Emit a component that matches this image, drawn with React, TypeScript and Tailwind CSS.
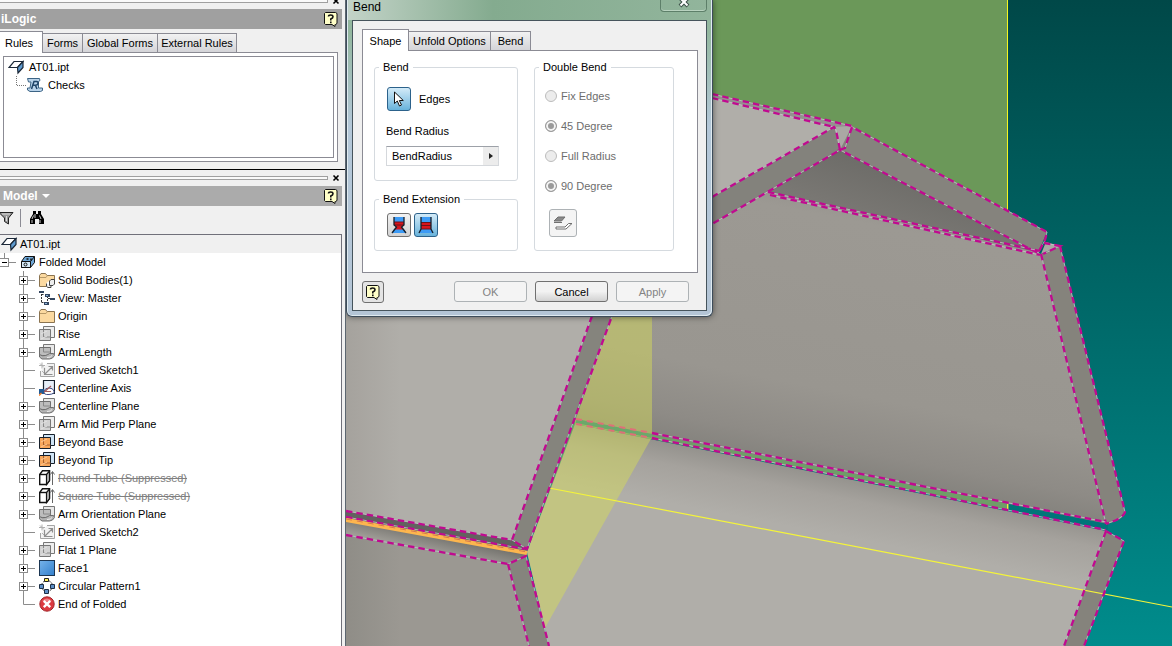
import type { ReactNode } from "react";

type TreeItem = {
   label: string;
   icon: ReactNode;
   expandable?: boolean;
   suppressed?: boolean;
};

export default function App() {
   return (
      <main className="flex h-screen overflow-hidden bg-[#f0f0f0] font-['Liberation_Sans',Arial,sans-serif] text-[11px] leading-4 text-black">
         <aside className="flex w-[346px] shrink-0 flex-col border-r border-[#5c6670] bg-[#f0f0f0]">
            <LogicPanel />
            <ModelPanel />
         </aside>

         <section className="relative min-w-0 flex-1 overflow-hidden">
            <Scene />
            <BendDialog />
         </section>
      </main>
   );
}

/* ---------- left side ---------- */

function LogicPanel() {
   return (
      <section className="border-b border-black pb-[7px]">
         <div className="flex h-[9px] items-end overflow-hidden">
            <Grip />
         </div>
         <PanelTitle color="bg-[#a0a0a0]">iLogic</PanelTitle>

         <nav className="-mb-px flex items-end pt-0.5">
            <button className={activeTab + " -ml-px h-[22px] w-11 pr-1"}>Rules</button>
            <button className={plainTab + " w-[41px]"}>Forms</button>
            <button className={plainTab + " w-[76px]"}>Global Forms</button>
            <button className={plainTab + " w-20"}>External Rules</button>
         </nav>

         <div className="mr-[7px] h-[110px] border border-l-0 border-[#8b8b94] bg-white p-[3px]">
            <ul className="h-full border border-[#8b8b94] bg-white pt-px">
               <li className="flex h-[18px] items-center gap-[5px] pl-1">
                  <PartIcon />
                  AT01.ipt
               </li>
               <li className="flex h-[18px] items-center pl-3">
                  <svg className="h-[18px] w-[11px]" viewBox="0 0 11 18">
                     <path d="M.5 0v9.500h11" fill="none" stroke="#777" strokeDasharray="1 1" />
                  </svg>
                  <RuleIcon />
                  <span className="pl-[5px]">Checks</span>
               </li>
            </ul>
         </div>
      </section>
   );
}

function ModelPanel() {
   return (
      <section className="flex min-h-0 flex-1 flex-col">
         <Grip />
         <PanelTitle color="bg-[#ababab]">
            <span className="flex items-center gap-1 pl-0.5">
               Model
               <svg className="h-1 w-2" viewBox="0 0 8 4"><path d="M0 0h8l-4 4z" fill="#fff" /></svg>
            </span>
         </PanelTitle>

         <div className="flex h-7 items-center pb-1">
            <button aria-label="Filter">
               <svg className="h-4 w-[14px]" viewBox="0 0 14 16">
                  <path d="M-1 2.500h14L8.500 8v6l-4-2.500V8z" fill="#999" stroke="#222" />
                  <path d="M2 4h8M6.500 6v5" stroke="#ddd" />
               </svg>
            </button>
            <span className="ml-1.5 mr-2 h-[18px] w-px bg-[#8b8b94]" />
            <button aria-label="Find">
               <svg className="h-4 w-4" viewBox="0 0 16 16">
                  <path d="M4 1h3v3h2V1h3v3l3 5v5h-5V9H6v5H1V9l3-5z" fill="#000" />
                  <path d="M4.500 5.500 3 9M6 4v4M10.500 5.500 12 9M3 10v3M11 10v3" stroke="#ccc" />
               </svg>
            </button>
         </div>

         <ul className="mr-[3px] flex-1 border-r border-t border-[#70707a] bg-white">
            <li className="flex h-[18px] items-center gap-[3px] bg-[#f0f0f0] pl-px">
               <PartIcon />
               AT01.ipt
            </li>
            <li className="flex h-[18px] items-center">
               <svg className="h-[18px] w-5" viewBox="0 0 20 18">
                  <path d="M4.500 0v5M9 9.500h7" stroke="#8c8c8c" />
                  <rect x="-.5" y="5.500" width="9" height="8" fill="#fff" stroke="#8c8c8c" />
                  <path d="M2 9.500h5" stroke="#000" />
               </svg>
               <FoldedIcon />
               <span className="pl-[3px]">Folded Model</span>
            </li>
            {items.map((item, i) => (
               <li key={item.label} className="flex h-[18px] items-center">
                  <Branch expandable={item.expandable} last={i === items.length - 1} />
                  {item.icon}
                  <span className={item.suppressed ? "pl-[3px] text-[#808080] line-through" : "pl-[3px]"}>
                     {item.label}
                  </span>
               </li>
            ))}
         </ul>
      </section>
   );
}

function Grip() {
   return (
      <div className="flex h-4 w-full shrink-0 items-center">
         <span className="h-1 w-[328px] border-b border-r border-t border-[#a0a0a0] bg-[#fafafa]" />
         <button aria-label="Close panel" className="ml-1">
            <svg className="h-2 w-2" viewBox="0 0 8 8">
               <path d="M1.500 1.500l5 5M6.500 1.500l-5 5" stroke="#000" strokeWidth="1.600" />
            </svg>
         </button>
      </div>
   );
}

function PanelTitle({ color, children }: { color: string; children: ReactNode }) {
   return (
      <header className={"mr-[3px] flex h-5 shrink-0 items-center justify-between pl-px pr-1 text-[12px] font-bold text-white " + color}>
         {children}
         <button aria-label="Help"><HelpIcon /></button>
      </header>
   );
}

function Branch({ expandable, last }: { expandable?: boolean; last?: boolean }) {
   return (
      <svg className="h-[18px] w-[39px] shrink-0" viewBox="0 0 39 18">
         <path d={last ? "M23.500 0v9.500H35" : "M23.500 0v18M23.500 9.500H35"} fill="none" stroke="#8c8c8c" />
         {expandable && (
            <>
               <rect x="19.500" y="5.500" width="8" height="8" fill="#fff" stroke="#8c8c8c" />
               <path d="M21 9.500h5M23.500 7v5" stroke="#000" />
            </>
         )}
      </svg>
   );
}

/* ---------- icons ---------- */

function Icon({ children }: { children: ReactNode }) {
   return <svg className="h-4 w-4 shrink-0" viewBox="0 0 16 16" fill="none">{children}</svg>;
}

function HelpIcon() {
   return (
      <svg className="h-[15px] w-[14px]" viewBox="0 0 14 15" fill="none">
         <path d="M1.500.5h10l1.500 1v10l-1.500 1H11v2l-3-2H1.500l-1-1v-10z" fill="#ffffc8" stroke="#111" />
         <path d="M4.500 4.500Q4.500 3 6.700 3T9 4.700Q9 6 6.800 7v1.500M6.800 9.500v1.700" stroke="#111" strokeWidth="1.600" />
      </svg>
   );
}

function PartIcon() {
   return (
      <Icon>
         <path d="M6 2.500h9L9.500 8.500H1z" fill="#fff" stroke="#1b2838" strokeWidth="1.200" />
         <path d="M15 2.500v6l-5 5.500-.5-5.500z" fill="#5f9bd0" stroke="#1b2838" strokeWidth="1.200" />
      </Icon>
   );
}

function RuleIcon() {
   return (
      <Icon>
         <path d="M.5 1.500h12l.5 2-1.500 1v6.500h4v2.500l-2 1H3L.5 13v-2H3L4 5H1.500z" fill="#b9d3ea" stroke="#3c6485" />
         <path d="M4.500 12 7 4.500h2.500q2 .3 1.500 2T8.500 8.300H6.500M8.500 8.500l1.500 3.500" stroke="#1f4468" strokeWidth="1.500" />
      </Icon>
   );
}

function FoldedIcon() {
   return (
      <Icon>
         <path d="M1.500 7.500 5 2.500h9.500v6l-4 5h-9z" fill="#6fa8d8" stroke="#111" />
         <path d="M1.500 7.500h9v6h-9z" fill="#d8ecfa" stroke="#111" />
         <path d="M10.500 7.500l4-5" stroke="#111" />
         <circle cx="5.500" cy="10.500" r="1.500" stroke="#111" />
         <path d="M6.500 5h2M11 4.500v2" stroke="#111" strokeWidth="1.500" />
      </Icon>
   );
}

function FolderIcon({ body }: { body?: boolean }) {
   return (
      <Icon>
         <path d="M.5 14.500v-11l1.500-2h4.500l1.500 2h7.500v11z" fill="#fbd9a0" stroke="#8a7350" />
         <path d="M1 5.500h6l1.500-2" stroke="#b89a68" />
         {body && (
            <>
               <path d="M7 11.500 9 9.500h7V16H7z" fill="#fff" />
               <path d="M10.500 9 12 7.500h3.500V12L14 13.500h-3.500zM7.500 11.500v3L9 15.500h3v-2" fill="#eee" stroke="#444" />
            </>
         )}
      </Icon>
   );
}

function ViewIcon() {
   return (
      <Icon>
         <path d="M2.500 4v8.500M2.500 4.500h3M2.500 12.500h3M8.500 6v7M9 8.500h3" stroke="#333" strokeDasharray="2 1" />
         <path d="M0 1h5v2H0zM6 4h5v3H6zM11 8h5v2h-5zM5 12h5v3H5z" fill="#33465f" />
         <path d="M7 5.500h2M6 13.500h2" stroke="#8fb5dd" />
      </Icon>
   );
}

function PlaneIcon({ orange }: { orange?: boolean }) {
   const line = orange ? "#16202c" : "#777";
   return (
      <Icon>
         <path d="M4.500.5h11v11h-11z" fill={orange ? "#cfe4f5" : "#eee"} stroke={line} />
         <path d="M.5 3.500h11v11H.5z" fill={orange ? "#f7a75c" : "#d2d2d2"} stroke={line} />
         <path d="M4.500 4v7h7" stroke={orange ? "#a8602c" : "#888"} />
         <path d="M2 8l6-3M2 13l6-3" stroke={orange ? "#ffc993" : "#e2e2e2"} />
      </Icon>
   );
}

function FixedPlaneIcon() {
   return (
      <Icon>
         <path d="M4.500.5h11v10h-11z" fill="#e8e8e8" stroke="#777" />
         <path d="M.5 3.500h11v8H.5z" fill="#bdbdbd" stroke="#6e6e6e" />
         <path d="M4.500 4v4h7" stroke="#888" />
         <path d="M.5 10.500q3 2 6 1t4-2h4l1 2-2 2.500-3 1H3l-2.500-2z" fill="#b4b4b4" stroke="#6e6e6e" />
         <path d="M8 13.500q4 0 5-2" stroke="#eee" />
      </Icon>
   );
}

function SketchIcon() {
   return (
      <Icon>
         <path d="M8 1.500h7.500v13H1.500V9" fill="#f2f2f2" stroke="#a5a5a5" />
         <path d="M5.500 6v6.500h8M6 12l7.500-7.500M9.500 4.500h4v4" stroke="#8f8f8f" strokeWidth="1.200" />
         <path d="M3 .5v6M0 3.500h6M1 1.500l4 4M3 9l2 2" stroke="#b0b0b0" />
      </Icon>
   );
}

function AxisIcon() {
   return (
      <Icon>
         <path d="M4.500.5h11v13h-11z" fill="#e6eef8" stroke="#16202c" strokeWidth="1.200" />
         <path d="M5 11q1-3 5-3t5 3-5 3.500T5 11z" fill="#fff" stroke="#3a4a86" />
         <path d="M4 13 12 6M6 11.500h6" stroke="#a05a5a" strokeWidth="1.200" />
         <path d="M0 9h5v5H0z" fill="#235a94" />
         <path d="M0 15.500 2.500 13" stroke="#f08030" strokeWidth="1.500" />
      </Icon>
   );
}

function TubeIcon() {
   return (
      <Icon>
         <path d="M.7 4.500 3.500.8h7v9.700L7.500 14.500H.7z" fill="#fff" stroke="#111" strokeWidth="1.400" />
         <path d="M7.500 4.500l3-3.500v9.500l-3 4z" fill="#bbb" stroke="#111" strokeWidth="1.200" />
         <path d="M.7 4.500h6.800" stroke="#111" strokeWidth="1.400" />
         <path d="M13.500 15V2M11.500 4.500l2-3 2 3" stroke="#666" />
      </Icon>
   );
}

function FaceIcon() {
   return (
      <Icon>
         <defs>
            <linearGradient id="face" x1="0" y1="0" x2="1" y2="1">
               <stop offset="0" stopColor="#76b3ea" />
               <stop offset="1" stopColor="#3380cc" />
            </linearGradient>
         </defs>
         <rect x=".5" y=".5" width="15" height="15" fill="url(#face)" stroke="#1b3552" />
      </Icon>
   );
}

function PatternIcon() {
   return (
      <Icon>
         <circle cx="8" cy="8" r="5.500" stroke="#333" strokeDasharray="2 1" />
         <path d="M5.500.5h4v3h-4z" fill="#ffef5a" stroke="#222" />
         <path d="M.5 6.500h4v4h-4zM11.500 6.500h4v4h-4zM5.500 11.500h4v4h-4z" fill="#5d8fc6" stroke="#1d2e44" />
      </Icon>
   );
}

function EndIcon() {
   return (
      <Icon>
         <circle cx="8" cy="8" r="7.200" fill="#dc3a40" stroke="#a3262b" />
         <path d="M3 5q5-5 10 0-5 1-10 0z" fill="#ee8085" />
         <path d="M4.800 4.800l6.400 6.400M11.200 4.800l-6.400 6.400" stroke="#fff" strokeWidth="2.400" />
      </Icon>
   );
}

const items: TreeItem[] = [
   { label: "Solid Bodies(1)", icon: <FolderIcon body />, expandable: true },
   { label: "View: Master", icon: <ViewIcon />, expandable: true },
   { label: "Origin", icon: <FolderIcon />, expandable: true },
   { label: "Rise", icon: <PlaneIcon />, expandable: true },
   { label: "ArmLength", icon: <FixedPlaneIcon />, expandable: true },
   { label: "Derived Sketch1", icon: <SketchIcon /> },
   { label: "Centerline Axis", icon: <AxisIcon /> },
   { label: "Centerline Plane", icon: <FixedPlaneIcon />, expandable: true },
   { label: "Arm Mid Perp Plane", icon: <PlaneIcon />, expandable: true },
   { label: "Beyond Base", icon: <PlaneIcon orange />, expandable: true },
   { label: "Beyond Tip", icon: <PlaneIcon orange />, expandable: true },
   { label: "Round Tube (Suppressed)", icon: <TubeIcon />, expandable: true, suppressed: true },
   { label: "Square Tube (Suppressed)", icon: <TubeIcon />, expandable: true, suppressed: true },
   { label: "Arm Orientation Plane", icon: <FixedPlaneIcon />, expandable: true },
   { label: "Derived Sketch2", icon: <SketchIcon /> },
   { label: "Flat 1 Plane", icon: <PlaneIcon />, expandable: true },
   { label: "Face1", icon: <FaceIcon />, expandable: true },
   { label: "Circular Pattern1", icon: <PatternIcon />, expandable: true },
   { label: "End of Folded", icon: <EndIcon /> },
];

/* ---------- dialog ---------- */

function BendDialog() {
   return (
      <section
         role="dialog"
         aria-label="Bend"
         className="absolute left-0 top-0 w-[367px] rounded-b-md border border-t-0 border-[#3d4c5a] bg-linear-to-b from-[#93b79f] from-10% via-[#b3c7d8] via-40% to-[#b4c5d6] px-[5px] pb-[5px] shadow-[inset_1px_0_0_#dfeaf0,inset_-1px_-1px_0_#dfeaf0,0_0_6px_rgba(0,0,0,0.5)]"
      >
         <header className="-mx-1 flex h-5 items-start justify-between bg-linear-to-r from-[#c3d3c8] via-[#84ab8f] via-40% to-[#92b59c] pl-[5px] pr-1">
            <h1 className="text-[12px] leading-[14px]">Bend</h1>
            <button aria-label="Close" className="flex h-3 w-[47px] items-start justify-center rounded-b-[4px] border border-t-0 border-[#5d7f69] shadow-[inset_0_-1px_0_#b9d3c0]">
               <svg className="h-2 w-3" viewBox="0 0 12 8">
                  <path d="M2 -2l8 8M10 -2l-8 8" stroke="#3c4f48" strokeWidth="4" />
                  <path d="M2.500 -1.500l7 7M9.500 -1.500l-7 7" stroke="#fff" strokeWidth="2" />
               </svg>
            </button>
         </header>

         <div className="border border-[#46545c] bg-[#f0f0f0] pb-[7px] pl-[9px] pr-2 pt-2">
            <nav className="-mb-px flex items-end">
               <button className={activeTab + " h-[22px] w-[47px]"}>Shape</button>
               <button className={plainTab + " w-[83px]"}>Unfold Options</button>
               <button className={plainTab + " w-[41px]"}>Bend</button>
            </nav>

            <div className="flex h-[223px] gap-4 border border-[#8b8b94] bg-white pl-[11px] pt-2">
               <div className="flex w-36 flex-col gap-2.5">
                  <fieldset className={group + " h-[122px]"}>
                     <legend className="ml-1 px-1">Bend</legend>
                     <div className="pl-3 pr-[18px] pt-3">
                        <div className="flex items-center gap-2">
                           <button id="edges" aria-label="Select edges" className={toolOn}>
                              <svg className="h-4 w-3" viewBox="0 0 12 16">
                                 <path d="M1.500 1v11.500l2.800-2.500 2.200 5 2-1-2.200-4.500h4z" fill="#fff" stroke="#111" />
                              </svg>
                           </button>
                           <label htmlFor="edges">Edges</label>
                        </div>
                        <label htmlFor="radius" className="-ml-px mt-3 block">Bend Radius</label>
                        <div className="-ml-px mt-[7px] flex h-5 border border-[#d5d8dc] border-t-[#9da1a8]">
                           <input id="radius" defaultValue="BendRadius" className="w-0 flex-1 pl-[5px] outline-none" />
                           <button aria-label="More values" className="flex w-[15px] items-center justify-center bg-[#ececec]">
                              <svg className="h-2 w-1" viewBox="0 0 4 8"><path d="M0 1v6l4-3z" fill="#222" /></svg>
                           </button>
                        </div>
                     </div>
                  </fieldset>

                  <fieldset className={group + " h-[60px]"}>
                     <legend className="ml-1 px-1">Bend Extension</legend>
                     <div className="flex gap-[3px] pl-3 pt-1.5">
                        <button aria-label="Perpendicular" className={toolOff}><BendShape narrow /></button>
                        <button aria-label="Aligned" className={toolOn}><BendShape /></button>
                     </div>
                  </fieldset>
               </div>

               <fieldset className={group + " h-48 w-[140px] text-[#6d6d6d]"}>
                  <legend className="ml-1 px-1 text-black">Double Bend</legend>
                  <div className="pl-2.5 pt-1.5">
                     <Radio name="corner" label="Fix Edges" />
                     <Radio name="corner" label="45 Degree" checked />
                     <Radio name="full" label="Full Radius" />
                     <Radio name="full" label="90 Degree" checked />
                     <button aria-label="Flip fixed edge" disabled className="ml-1 mt-2 flex h-7 w-7 items-center justify-center rounded-[3px] border border-[#adb2b5] bg-[#f4f4f4]">
                        <svg className="h-4 w-5 shrink-0" viewBox="0 0 20 16">
                           <path d="M1 6 5 2h7L8.500 6z" fill="#8a8a8a" stroke="#6f6f6f" />
                           <path d="M1 7.500h8M3 14h10l6-5.500h-3.500L12 12H3z" fill="#fff" stroke="#6f6f6f" />
                        </svg>
                     </button>
                  </div>
               </fieldset>
            </div>

            <footer className="flex gap-2 pr-[9px] pt-2">
               <button aria-label="Help" className="mr-auto flex h-[22px] w-[22px] items-center justify-center rounded-[3px] border border-[#707070] bg-[#e4e4e4]">
                  <HelpIcon />
               </button>
               <button disabled className={dialogButton + " border-[#adb2b5] bg-[#f4f4f4] text-[#838383]"}>OK</button>
               <button className={dialogButton + " border-[#707070] bg-linear-to-b from-[#f2f2f2] from-50% to-[#d2d2d2]"}>Cancel</button>
               <button disabled className={dialogButton + " border-[#adb2b5] bg-[#f4f4f4] text-[#838383]"}>Apply</button>
            </footer>
         </div>
      </section>
   );
}

function Radio({ name, label, checked }: { name: string; label: string; checked?: boolean }) {
   return (
      <label className="flex h-[30px] items-center gap-1">
         <input
            type="radio"
            name={name}
            defaultChecked={checked}
            disabled
            className="h-3 w-3 appearance-none rounded-full border border-[#bcbcbc] bg-[#ececec] checked:border-[#9a9a9a] checked:bg-[#9a9a9a] checked:shadow-[inset_0_0_0_2px_#f4f4f4]"
         />
         {label}
      </label>
   );
}

function BendShape({ narrow }: { narrow?: boolean }) {
   return (
      <svg className="h-[18px] w-4 shrink-0" viewBox="0 0 16 18">
         <path d="M3 1h10v5H3zM3 13h10l2 4H1z" fill="#3d9bf5" />
         <path d={narrow ? "M3 6h10v3l-2.500 2 2.500 2.500H3L5.500 11 3 9z" : "M3 6h10v7H3z"} fill="#d8141c" />
         <path d={narrow ? "M3 6h10M3 9h10" : "M3 6.500h10M3 9.500h10M3 13h10"} stroke="#701018" />
         <path d={narrow ? "M3 1v8l2.500 2L1 17M13 1v8l-2.500 2 4.500 6" : "M3 1v12l-2 4M13 1v12l2 4"} fill="none" stroke="#16202c" strokeWidth="1.300" />
      </svg>
   );
}

const activeTab = "relative border border-b-0 border-[#8b8b94] bg-white text-center";
const plainTab = "-ml-px mb-px h-[19px] border border-b-0 border-[#8b8b94] bg-linear-to-b from-[#f2f2f2] to-[#d4d4d8] text-center whitespace-nowrap";
const group = "rounded-[3px] border border-[#d5dadf]";
const toolOn = "flex h-6 w-6 items-center justify-center rounded-[3px] border border-[#2c628b] bg-linear-to-b from-[#d3ebf8] to-[#68b3db]";
const toolOff = "flex h-6 w-6 items-center justify-center rounded-[3px] border border-[#707070] bg-linear-to-b from-[#f2f2f2] to-[#d2d2d2]";
const dialogButton = "h-[21px] w-[73px] rounded-[3px] border text-center";

/* ---------- 3D view ---------- */

// sheet metal edges, highlighted for the bend command
const edges = [
   "M712 94 852 126",
   "M712 98 834 127",
   "M712 197 834 127 836 130 840 150 712 224",
   "M840 150 845 148 852 127 1047 232 1045 240 1038 253Z",
   "M768 192 1040 251",
   "M770 195 1040 255",
   "M1044 243 1060 246 1043 254",
   "M1041 254 1106 524",
   "M1060 246 1125 512Q1124 518 1106 524",
   "M652 433 1106 522",
   "M652 438 1106 530",
   "M1106 531 1124 541 1084 646",
   "M1106 531 1064 646",
   "M592 316 512 540 527 549 612 316",
   "M346 511 512 540",
   "M346 517 525 549",
   "M346 535 508 564 526 556 549 646",
   "M508 564 529 646",
];

function Scene() {
   return (
      <svg className="block h-full w-full" viewBox="346 0 826 646" preserveAspectRatio="xMinYMin slice">
         <defs>
            <linearGradient id="sky" x1="0" y1="0" x2="0" y2="1">
               <stop offset="0" stopColor="#004848" />
               <stop offset="1" stopColor="#008c8c" />
            </linearGradient>
            <linearGradient id="inner" gradientUnits="userSpaceOnUse" x1="850" y1="474" x2="908" y2="176">
               <stop offset="0" stopColor="#85837e" />
               <stop offset=".08" stopColor="#8e8b86" />
               <stop offset=".26" stopColor="#999690" />
               <stop offset=".82" stopColor="#9c9993" />
               <stop offset="1" stopColor="#8b8984" />
            </linearGradient>
            <linearGradient id="lower" gradientUnits="userSpaceOnUse" x1="850" y1="474" x2="838" y2="536">
               <stop offset="0" stopColor="#918f8a" />
               <stop offset=".4" stopColor="#a5a29d" />
               <stop offset="1" stopColor="#b0aea9" />
            </linearGradient>
            <linearGradient id="roof" gradientUnits="userSpaceOnUse" x1="900" y1="165" x2="880" y2="225">
               <stop offset="0" stopColor="#6c6b67" />
               <stop offset="1" stopColor="#7a7874" />
            </linearGradient>
            <linearGradient id="left" gradientUnits="userSpaceOnUse" x1="346" y1="0" x2="400" y2="0">
               <stop offset="0" stopColor="#a5a29d" />
               <stop offset="1" stopColor="#b0aea9" />
            </linearGradient>
            <linearGradient id="leftLower" gradientUnits="userSpaceOnUse" x1="346" y1="0" x2="400" y2="0">
               <stop offset="0" stopColor="#8f8d87" />
               <stop offset="1" stopColor="#9b9892" />
            </linearGradient>
            <linearGradient id="fold" gradientUnits="userSpaceOnUse" x1="430" y1="534" x2="426" y2="552">
               <stop offset="0" stopColor="#75746f" />
               <stop offset="1" stopColor="#a3a09a" />
            </linearGradient>
         </defs>

         <path d="M346 0h826v646H346z" fill="url(#sky)" />
         <path d="M346 0h661v300H346z" fill="#6b9859" />
         <path d="M1007.500 0v211" stroke="#f6f61e" />

         {/* upper faces */}
         <path d="M712 94 852 126 841 150 712 105z" fill="#94918f" />
         <path d="M712 98 834 127 712 197z" fill="#b0aea9" />
         <path d="M834 127 852 126 841 150z" fill="#aaa8a4" />
         <path d="M840 150 1041 254 1106 524 575 421 612 316 712 224z" fill="url(#inner)" />
         <path d="M840 150 1040 253 768 192z" fill="url(#roof)" />
         <path d="M712 197 834 127 840 150 712 224z" fill="#83827c" />
         <path d="M840 150 852 126 1047 232 1038 253z" fill="#85837d" />
         <path d="M1046 242 1060 246 1041 254z" fill="#aaa8a4" />
         <path d="M1041 254 1060 246 1125 512Q1124 520 1106 524z" fill="#85837c" />

         {/* lower face and the relief gap */}
         <path d="M575 424 1106 531 1064 646H549L527 552z" fill="url(#lower)" />
         <path d="M1106 531 1124 541 1084 646h-20z" fill="#85837c" />
         <path d="M575 420 1010 504v6L575 424z" fill="#6f9d68" />
         <path d="M1009 504 1108 524v6l-99-20z" fill="#007579" />
         <path d="M1007.500 504v6" stroke="#f2f23c" />

         {/* left side */}
         <path d="M346 300h252L512 540l-166-28z" fill="url(#left)" />
         <path d="M346 512 527 550 526 556 508 564 346 535z" fill="url(#fold)" />
         <path d="M346 511 512 540 527 550 346 518z" fill="#62615f" />
         <path d="M346 535 508 564l21 82H346z" fill="url(#leftLower)" />
         <path d="M592 316h20L527 550l-15-10z" fill="#85847d" />
         <path d="M508 564 526 556 549 646h-20z" fill="#85847d" />

         {/* work plane */}
         <path d="M612 316h40v121L545 628 527 552z" fill="#d6dc58" fillOpacity=".48" />
         <path d="M576 421 652 436" stroke="#6ba86a" strokeWidth="4" />
         <path d="M576 419 652 433M576 424 652 438" stroke="#df6f78" strokeWidth="2" strokeDasharray="6 5" />
         <path d="M549 488 1172 607" stroke="#f4f43a" strokeWidth="1.200" />

         {edges.map((d) => (
            <g key={d} fill="none">
               <path d={d} stroke="#c9c3cc" strokeWidth=".8" />
               <path d={d} stroke="#c00a90" strokeWidth="2.300" strokeDasharray="6.500 4" />
            </g>
         ))}

         <path d="M346 520 527 553" stroke="#fdb64e" strokeWidth="4" />
         <path d="M346 519 527 552" stroke="#d9794e" strokeDasharray="6 5" />
      </svg>
   );
}
